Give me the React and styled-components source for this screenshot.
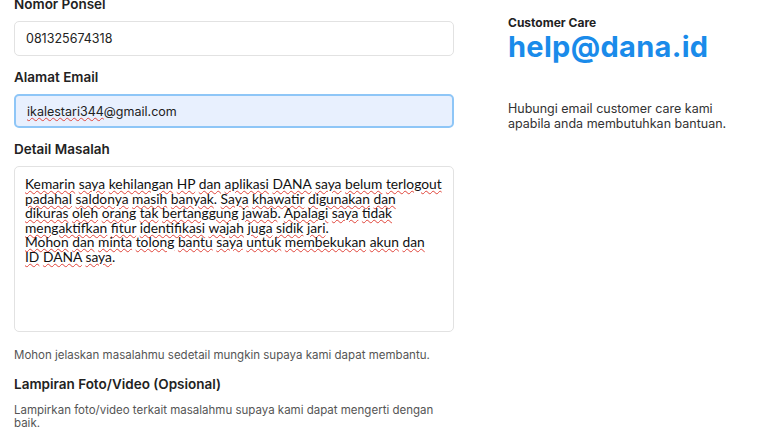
import React from 'react';
import styled, { createGlobalStyle } from 'styled-components';

const GlobalStyle = createGlobalStyle`
  body {
    margin: 0;
    background: #fff;
    font-family: Inter, "Noto Sans", sans-serif;
    color: #222;
  }
`;

const problem = [
  'Kemarin saya kehilangan HP dan aplikasi DANA saya belum terlogout',
  'padahal saldonya masih banyak. Saya khawatir digunakan dan',
  'dikuras oleh orang tak bertanggung jawab. Apalagi saya tidak',
  'mengaktifkan fitur identifikasi wajah juga sidik jari.',
  'Mohon dan minta tolong bantu saya untuk membekukan akun dan',
  'ID DANA saya.',
];

// words the browser spellchecker flags, with trailing punctuation kept apart
const Flagged = ({ text }) =>
  text.split(' ').map((word, i) => {
    const m = word.match(/^(.*?)([.,]?)$/);
    return (
      <React.Fragment key={i}>
        {i > 0 && ' '}
        <Squiggle>{m[1]}</Squiggle>
        {m[2]}
      </React.Fragment>
    );
  });

const App = () => {
  return (
    <>
      <GlobalStyle />
      <Page>
        <FormColumn>
          <Label>Nomor Ponsel</Label>
          <Input>081325674318</Input>

          <Label>Alamat Email</Label>
          <Input $autofill>
            <Squiggle>ikalestari344</Squiggle>@gmail.com
          </Input>

          <Label>Detail Masalah</Label>
          <TextArea>
            {problem.map((line, i) => (
              <Line key={i}>
                <Flagged text={line} />
              </Line>
            ))}
          </TextArea>
          <Hint>Mohon jelaskan masalahmu sedetail mungkin supaya kami dapat membantu.</Hint>

          <Label $gap="12px">Lampiran Foto/Video (Opsional)</Label>
          <Hint $top="3px">
            Lampirkan foto/video terkait masalahmu supaya kami dapat mengerti dengan baik.
          </Hint>
        </FormColumn>

        <SideColumn>
          <CareTitle>Customer Care</CareTitle>
          <CareEmail>help@dana.id</CareEmail>
          <CareText>
            Hubungi email customer care kami
            <br />
            apabila anda membutuhkan bantuan.
          </CareText>
        </SideColumn>
      </Page>
    </>
  );
};

export default App;

const Page = styled.div`
  display: flex;
  align-items: flex-start;
  margin-top: -5px;
  padding-left: 14px;
`;

const FormColumn = styled.div`
  width: 440px;
  display: flex;
  flex-direction: column;
`;

const SideColumn = styled.div`
  margin-left: 54px;
  padding-top: 20px;
  display: flex;
  flex-direction: column;
`;

const Label = styled.div`
  font-size: 13.5px;
  font-weight: 600;
  line-height: 18px;
  color: #222;
  margin-top: ${(p) => p.$gap || '0'};
  margin-bottom: 8px;
`;

const Input = styled.div`
  box-sizing: border-box;
  height: ${(p) => (p.$autofill ? '34px' : '35px')};
  display: flex;
  align-items: center;
  padding: 0 11px;
  font-size: 12.5px;
  color: #222;
  background: ${(p) => (p.$autofill ? '#e8f0fe' : '#fff')};
  border: ${(p) => (p.$autofill ? '2px solid #8ec6f7' : '1px solid #e2e2e2')};
  border-radius: 5px;
  margin-bottom: 12px;
  white-space: pre;
`;

const TextArea = styled.div`
  box-sizing: border-box;
  height: 166px;
  padding: 10px 10px;
  font-family: Lato, "Noto Sans", sans-serif;
  font-size: 13.8px;
  color: #111;
  border: 1px solid #e2e2e2;
  border-radius: 5px;
  white-space: nowrap;
`;

const Line = styled.div`
  height: 14.5px;
  line-height: 14.5px;
`;

const Squiggle = styled.span`
  text-decoration: underline wavy #e0443a;
  text-decoration-thickness: 1px;
  text-underline-offset: 1px;
`;

const Hint = styled.div`
  font-size: 11.5px;
  line-height: 13.5px;
  color: #555;
  margin-top: ${(p) => p.$top || '17px'};
`;

const CareTitle = styled.div`
  font-size: 12px;
  font-weight: 700;
  color: #222;
  line-height: 15px;
`;

const CareEmail = styled.div`
  font-size: 29px;
  font-weight: 700;
  color: #1a8bea;
  line-height: 33px;
  letter-spacing: 0.3px;
`;

const CareText = styled.div`
  margin-top: 38px;
  font-size: 12.5px;
  line-height: 15px;
  color: #333;
`;
